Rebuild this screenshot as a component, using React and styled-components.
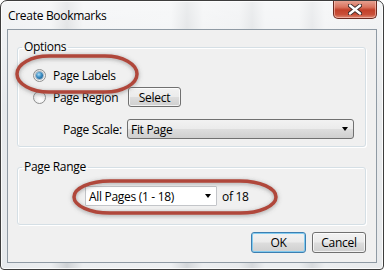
import React from "react";
import styled, { createGlobalStyle } from "styled-components";

const GlobalStyle = createGlobalStyle`
  html, body {
    margin: 0;
    padding: 0;
    background: #ffffff;
  }
  body {
    font-family: "Open Sans", "Noto Sans", sans-serif;
    font-size: 12px;
    color: #000000;
  }
`;

const Window = styled.div`
  position: relative;
  width: 384px;
  height: 270px;
  box-sizing: border-box;
  border: 1px solid #3d3d3d;
  border-radius: 7px 7px 4px 4px;
  padding: 0 6px 6px 6px;
  display: flex;
  flex-direction: column;
  overflow: hidden;
  background:
    linear-gradient(180deg, rgba(255, 255, 255, 0.55) 0%, rgba(255, 255, 255, 0) 40%),
    linear-gradient(
      90deg,
      #e6e9ec 0px,
      #eceef0 50px,
      #cfd2d5 66px,
      #eceef0 82px,
      #eef0f2 170px,
      #d4d7da 186px,
      #eceef0 202px,
      #e9ebed 238px,
      #d6d9dc 251px,
      #eceef0 264px,
      #eceef0 298px,
      #d8dbde 311px,
      #eceef0 324px,
      #e8eaec 384px
    );
  box-shadow: inset 0 0 0 1px rgba(255, 255, 255, 0.8);
`;

const TitleBar = styled.div`
  height: 28px;
  flex: none;
  display: flex;
  align-items: flex-start;
  justify-content: space-between;
`;

const Title = styled.span`
  margin-top: 6px;
  margin-left: 1px;
  font-size: 12px;
  letter-spacing: -0.3px;
  color: #000000;
`;

const CloseButton = styled.div`
  width: 44px;
  height: 19px;
  margin-top: -1px;
  box-sizing: border-box;
  border: 1px solid #6b2a20;
  border-top: none;
  border-radius: 0 0 5px 5px;
  background: linear-gradient(
    180deg,
    #e8a898 0%,
    #d9735e 40%,
    #c2412a 55%,
    #c94f38 80%,
    #dc8a74 100%
  );
  box-shadow: inset 0 0 0 1px rgba(255, 210, 200, 0.55);
  display: flex;
  align-items: center;
  justify-content: center;
`;

const Client = styled.div`
  flex: 1;
  background: #f0f0f0;
  border: 1px solid #8f9aa4;
  display: flex;
  flex-direction: column;
  padding: 9px 10px 0 9px;
`;

const Group = styled.fieldset`
  margin: ${(p) => p.$top || 0}px 0 0 0;
  padding: ${(p) => p.$pad};
  border: 1px solid #d5dfe5;
  border-radius: 3px;
  box-shadow: inset 1px 1px 0 #ffffff, 1px 1px 0 #ffffff;
  min-width: 0;
`;

const Legend = styled.legend`
  margin-left: 4px;
  padding: 0 2px;
  font-size: 12px;
  letter-spacing: -0.3px;
  line-height: 16px;
`;

const Row = styled.div`
  display: flex;
  align-items: center;
  height: 20px;
  margin-top: ${(p) => p.$top || 0}px;
  padding-left: ${(p) => p.$indent || 0}px;
`;

const Radio = styled.span`
  width: 13px;
  height: 13px;
  flex: none;
  box-sizing: border-box;
  border-radius: 50%;
  border: 1px solid #8e8f8f;
  background: radial-gradient(circle at 60% 65%, #ffffff 0%, #f1f1f1 45%, #d4d4d4 100%);
  display: flex;
  align-items: center;
  justify-content: center;
`;

const RadioDot = styled.span`
  width: 7px;
  height: 7px;
  border-radius: 50%;
  background: radial-gradient(circle at 40% 35%, #a9dcf6 0%, #3b8cc2 45%, #0f4e80 100%);
  box-shadow: 0 0 0 1px rgba(20, 70, 110, 0.35);
`;

const Label = styled.span`
  margin-left: ${(p) => p.$gap || 0}px;
  width: ${(p) => (p.$w ? `${p.$w}px` : "auto")};
  flex: none;
  font-size: 12px;
  letter-spacing: -0.3px;
  white-space: nowrap;
`;

const Button = styled.div`
  width: ${(p) => p.$w}px;
  height: ${(p) => p.$h || 21}px;
  margin-left: ${(p) => p.$ml || 0}px;
  flex: none;
  box-sizing: border-box;
  border: 1px solid ${(p) => (p.$default ? "#3c7fb1" : "#707070")};
  border-radius: 3px;
  background: linear-gradient(180deg, #f2f2f2 0%, #ebebeb 48%, #dddddd 52%, #cfcfcf 100%);
  box-shadow: inset 0 0 0 1px
    ${(p) => (p.$default ? "rgba(120, 200, 240, 0.9)" : "rgba(255, 255, 255, 0.7)")};
  display: flex;
  align-items: center;
  justify-content: center;
  font-size: 12px;
  letter-spacing: -0.3px;
`;

const Combo = styled.div`
  width: ${(p) => p.$w}px;
  height: ${(p) => p.$h || 20}px;
  margin-left: ${(p) => p.$ml || 0}px;
  flex: none;
  box-sizing: border-box;
  border: 1px solid ${(p) => (p.$flat ? "#c3c5c9" : "#707070")};
  border-radius: ${(p) => (p.$flat ? 1 : 3)}px;
  background: ${(p) =>
    p.$flat
      ? "#ffffff"
      : "linear-gradient(180deg, #f2f2f2 0%, #ebebeb 48%, #dddddd 52%, #cfcfcf 100%)"};
  display: flex;
  align-items: center;
  justify-content: space-between;
  padding: 0 5px 0 3px;
  font-size: 12px;
  letter-spacing: -0.3px;
`;

const Arrow = styled.span`
  width: 0;
  height: 0;
  border-left: 3.5px solid transparent;
  border-right: 3.5px solid transparent;
  border-top: 4px solid #000000;
`;

const ButtonRow = styled.div`
  display: flex;
  justify-content: flex-end;
  margin-top: 7px;
`;

const Marks = styled.svg`
  position: absolute;
  left: 0;
  top: 0;
  pointer-events: none;
`;

const CloseGlyph = () => (
  <svg width="14" height="11" viewBox="0 0 14 11">
    <path
      d="M2 1.5 L12 9.5 M12 1.5 L2 9.5"
      stroke="#3a2a28"
      strokeWidth="4.2"
      strokeLinecap="round"
    />
    <path
      d="M2 1.5 L12 9.5 M12 1.5 L2 9.5"
      stroke="#ffffff"
      strokeWidth="2.4"
      strokeLinecap="round"
    />
  </svg>
);

export default function App() {
  return (
    <>
      <GlobalStyle />
      <Window>
        <TitleBar>
          <Title>Create Bookmarks</Title>
          <CloseButton>
            <CloseGlyph />
          </CloseButton>
        </TitleBar>
        <Client>
          <Group $pad="10px 10px 7px 0">
            <Legend>Options</Legend>
            <Row $indent={15}>
              <Radio>
                <RadioDot />
              </Radio>
              <Label $gap={7}>Page Labels</Label>
            </Row>
            <Row $top={2} $indent={15}>
              <Radio />
              <Label $gap={7} $w={75}>Page Region</Label>
              <Button $w={53} $h={20}>Select</Button>
            </Row>
            <Row $top={12} $indent={45}>
              <Label $w={64}>Page Scale:</Label>
              <Combo $w={227}>
                <span>Fit Page</span>
                <Arrow />
              </Combo>
            </Row>
          </Group>
          <Group $pad="11px 10px 18px 0" $top={12}>
            <Legend>Page Range</Legend>
            <Row $indent={67}>
              <Combo $w={132} $flat>
                <span>All Pages (1 - 18)</span>
                <Arrow />
              </Combo>
              <Label $gap={5}>of 18</Label>
            </Row>
          </Group>
          <ButtonRow>
            <Button $w={55} $default>OK</Button>
            <Button $w={54} $ml={6}>Cancel</Button>
          </ButtonRow>
        </Client>
        <Marks width="384" height="270" viewBox="0 0 384 270">
          <defs>
            <filter id="mark-shadow" x="-20%" y="-40%" width="140%" height="180%">
              <feDropShadow dx="0" dy="1" stdDeviation="2.2" floodColor="#5a5a5a" floodOpacity="0.55" />
            </filter>
          </defs>
          <rect
            x="16"
            y="55"
            width="120"
            height="36"
            rx="32"
            ry="18"
            fill="none"
            stroke="#b0473a"
            strokeWidth="3.5"
            filter="url(#mark-shadow)"
          />
          <rect
            x="73"
            y="180"
            width="202"
            height="32"
            rx="36"
            ry="16"
            fill="none"
            stroke="#b0473a"
            strokeWidth="3.5"
            filter="url(#mark-shadow)"
          />
        </Marks>
      </Window>
    </>
  );
}
